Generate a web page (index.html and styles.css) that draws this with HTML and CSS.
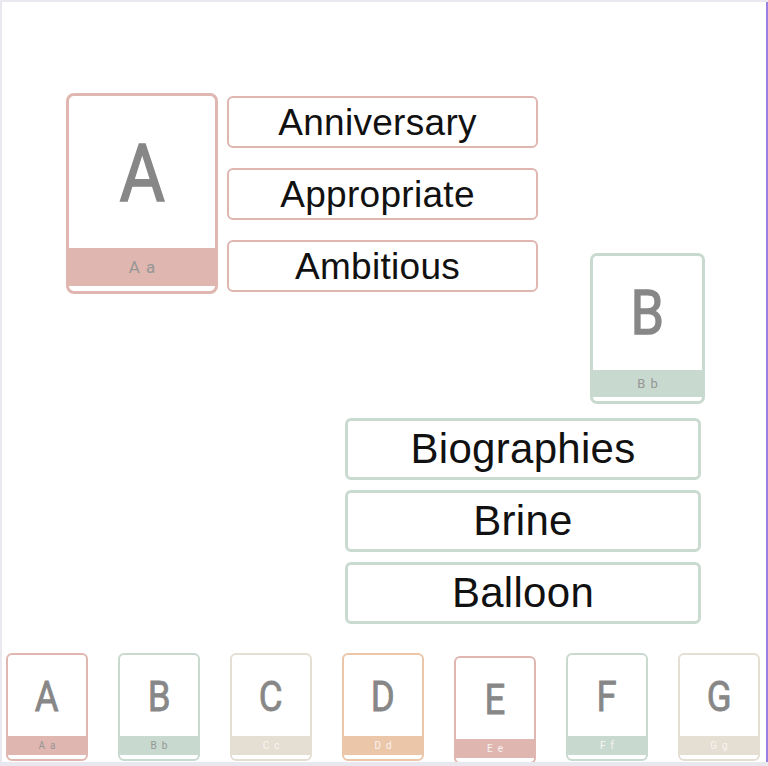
FILE: index.html
```html
<!DOCTYPE html>
<html lang="en">
<head>
<meta charset="utf-8">
<title>Alphabet word cards</title>
<link rel="stylesheet" href="styles.css">
</head>
<body>
<div class="page">
  <div class="top">
    <div class="card card-lg pink">
      <div class="face"><span class="glyph">A</span></div>
      <div class="band dark">Aa</div>
    </div>
    <div class="words words-pink">
      <div class="word">Anniversary</div>
      <div class="word">Appropriate</div>
      <div class="word">Ambitious</div>
    </div>
    <div class="card card-md green">
      <div class="face"><span class="glyph">B</span></div>
      <div class="band dark">Bb</div>
    </div>
  </div>
  <div class="words words-green">
    <div class="word">Biographies</div>
    <div class="word">Brine</div>
    <div class="word">Balloon</div>
  </div>
  <div class="row">
    <div class="card card-sm pink"><div class="face"><span class="glyph">A</span></div><div class="band dark">Aa</div></div>
    <div class="card card-sm green"><div class="face"><span class="glyph">B</span></div><div class="band dark">Bb</div></div>
    <div class="card card-sm beige"><div class="face"><span class="glyph">C</span></div><div class="band">Cc</div></div>
    <div class="card card-sm peach"><div class="face"><span class="glyph">D</span></div><div class="band">Dd</div></div>
    <div class="card card-sm pink card-low"><div class="face"><span class="glyph">E</span></div><div class="band">Ee</div></div>
    <div class="card card-sm green"><div class="face"><span class="glyph">F</span></div><div class="band">Ff</div></div>
    <div class="card card-sm beige"><div class="face"><span class="glyph">G</span></div><div class="band">Gg</div></div>
  </div>
</div>
</body>
</html>
```

FILE: styles.css
```css
* { box-sizing: border-box; }
html, body { margin: 0; padding: 0; }
body {
  background: #e8e8ee;
  width: 768px;
  height: 766px;
  overflow: hidden;
}
.page {
  margin: 2px 0 0 2px;
  width: 766px;
  height: 760px;
  background: #ffffff;
  border-right: 2px solid #9a80e0;
  overflow: hidden;
}

/* letter cards */
.card {
  display: flex;
  flex-direction: column;
  background: #fff;
  border-style: solid;
  font-family: Roboto, "Noto Sans", sans-serif;
  color: #878787;
  flex-shrink: 0;
}
.face {
  flex: 1;
  display: flex;
  align-items: center;
  justify-content: center;
  line-height: 1;
}
.glyph {
  display: inline-block;
  transform: scaleX(0.87);
  -webkit-text-stroke: 1.6px #878787;
}
.band {
  display: flex;
  align-items: center;
  justify-content: center;
  color: #f7f4f1;
}
.band.dark { color: #969696; }

.pink { border-color: #e0b7b0; }
.pink .band { background: #e0b7b0; }
.green { border-color: #c8d9cf; }
.green .band { background: #c8d9cf; }
.beige { border-color: #e5ded3; }
.beige .band { background: #e5ded3; }
.peach { border-color: #ebc6a9; }
.peach .band { background: #ebc6a9; }

.card-lg {
  width: 152px;
  height: 201px;
  border-width: 3px;
  border-radius: 8px;
  padding-bottom: 5px;
}
.card-lg .face { font-size: 80px; padding-top: 4px; }
.card-lg .band { height: 38px; font-size: 17px; letter-spacing: 6px; padding-left: 6px; }

.card-md {
  width: 115px;
  height: 151px;
  border-width: 3px;
  border-radius: 7px;
  padding-bottom: 4px;
  margin-left: 52px;
  margin-top: 160px;
}
.card-md .face { font-size: 62px; }
.card-md .glyph { -webkit-text-stroke-width: 1.3px; }
.card-md .band { height: 27px; font-size: 13px; letter-spacing: 5px; padding-left: 5px; }

.card-sm {
  width: 82px;
  height: 108px;
  border-width: 2px;
  border-radius: 6px;
  padding-bottom: 4px;
}
.card-sm .face { font-size: 42px; padding-top: 2px; }
.card-sm .glyph { -webkit-text-stroke-width: 0.8px; }
.card-sm .band { height: 19px; font-size: 10px; letter-spacing: 5px; padding-left: 5px; }
.card-low { margin-top: 3px; }

/* layout */
.top {
  display: flex;
  align-items: flex-start;
  padding-top: 91px;
  padding-left: 64px;
}
.words {
  display: flex;
  flex-direction: column;
  font-family: "Liberation Sans", Arial, sans-serif;
  color: #111;
}
.word {
  display: flex;
  align-items: center;
  justify-content: center;
  background: #fff;
  line-height: 1;
}
.words-pink {
  margin-left: 9px;
  margin-top: 3px;
  width: 311px;
  gap: 20px;
}
.words-pink .word {
  height: 52px;
  border: 2px solid #dfb6b0;
  border-radius: 6px;
  font-size: 37px;
  letter-spacing: 0.3px;
  padding-right: 10px;
}
.words-green {
  margin-left: 343px;
  margin-top: 14px;
  width: 356px;
  gap: 10px;
}
.words-green .word {
  height: 62px;
  border: 3px solid #c9dbd0;
  border-radius: 6px;
  font-size: 42px;
  letter-spacing: 0.3px;
}
.row {
  display: flex;
  align-items: flex-start;
  justify-content: space-between;
  margin-top: 29px;
  padding: 0 6px 0 4px;
}
```
